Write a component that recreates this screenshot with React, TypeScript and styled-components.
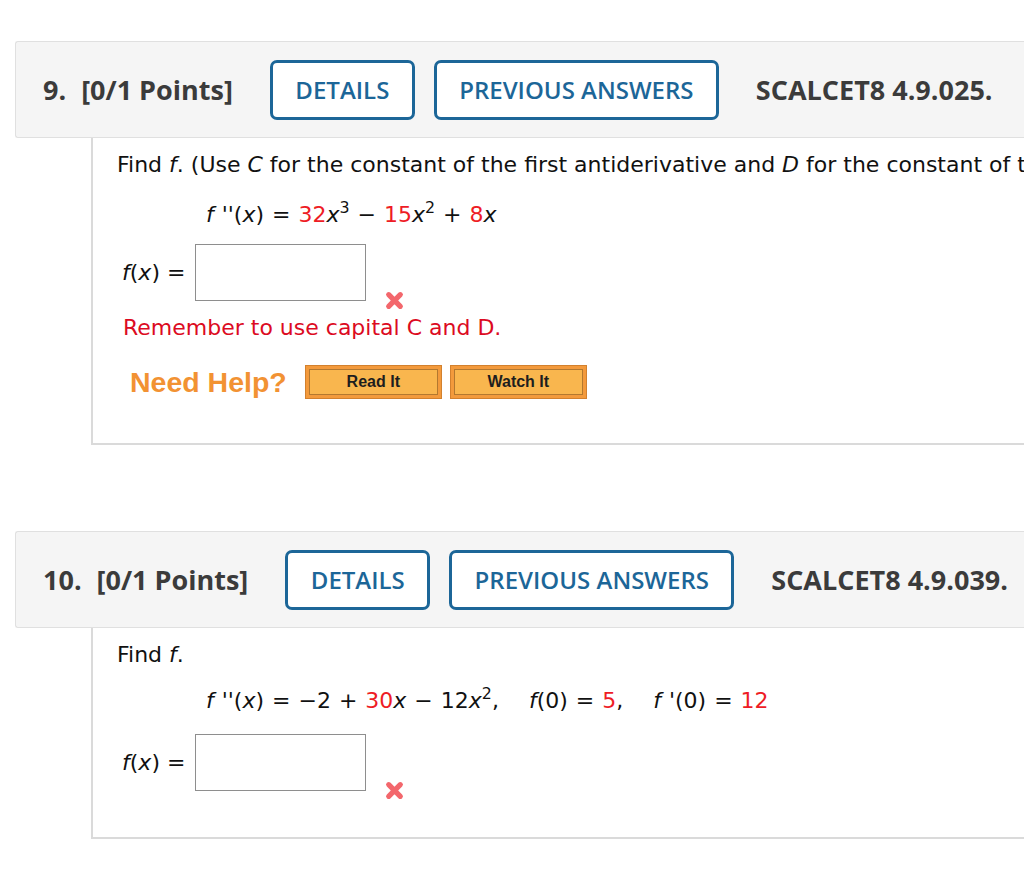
import React from 'react';
import styled, { createGlobalStyle } from 'styled-components';

const GlobalStyle = createGlobalStyle`
  html, body {
    margin: 0;
    padding: 0;
    background: #ffffff;
    overflow: hidden;
  }
`;

const Page = styled.div`
  padding: 41px 0 0 15px;
  width: 1200px;
`;

const Question = styled.section`
  margin-bottom: 86px;
`;

const Header = styled.div`
  display: flex;
  align-items: center;
  box-sizing: border-box;
  height: 97px;
  padding-left: 27px;
  background: #f5f5f5;
  border: 1px solid #e0e0e0;
  border-right: none;
  border-radius: 3px 0 0 3px;
  font-family: 'Open Sans', 'Liberation Sans', sans-serif;
  color: #3b3b3b;
`;

const QNum = styled.span`
  font-size: 27px;
  font-weight: 700;
  margin-right: 15px;
`;

const Points = styled.span`
  font-size: 27px;
  font-weight: 700;
  margin-right: 37px;
`;

const OutlineButton = styled.button<{ $w: number; $after: number }>`
  box-sizing: border-box;
  height: 60px;
  width: ${p => p.$w}px;
  margin-right: ${p => p.$after}px;
  background: #ffffff;
  border: 3px solid #1c6698;
  border-radius: 7px;
  font-family: 'Open Sans', 'Liberation Sans', sans-serif;
  font-size: 24px;
  font-weight: 600;
  color: #1c6698;
  padding: 0;
`;

const Reference = styled.span`
  font-size: 27px;
  font-weight: 700;
`;

const Body = styled.div<{ $bottom: number }>`
  margin-left: 76px;
  padding: 12px 0 ${p => p.$bottom}px 24px;
  border-left: 2px solid #dadada;
  border-bottom: 2px solid #dadada;
  font-family: 'DejaVu Sans', Verdana, sans-serif;
  font-size: 22px;
  line-height: 30px;
  color: #111111;
  white-space: nowrap;
`;

const Prompt = styled.div``;

const Formula = styled.div<{ $top: number }>`
  margin: ${p => p.$top}px 0 0 89px;
  word-spacing: 1px;
`;

const V = styled.i`
  font-style: italic;
`;

const Num = styled.span`
  color: #ee1c25;
`;

const Sup = styled.sup`
  font-size: 0.72em;
  line-height: 0;
  vertical-align: 0.55em;
`;

const Gap = styled.span<{ $w: number }>`
  display: inline-block;
  width: ${p => p.$w}px;
`;

const AnswerRow = styled.div<{ $top: number }>`
  display: flex;
  align-items: center;
  margin-top: ${p => p.$top}px;
  padding-left: 5px;
`;

const Label = styled.span`
  margin-right: 10px;
`;

const AnswerBox = styled.div`
  box-sizing: border-box;
  width: 171px;
  height: 57px;
  background: #fff;
  border: 1px solid #8e8e8e;
`;

const WrongMark = styled.svg`
  align-self: flex-end;
  margin: 0 0 -10px 18px;
  width: 21px;
  height: 21px;
`;

const Feedback = styled.div`
  margin: 12px 0 0 6px;
  color: #dc0a22;
`;

const HelpRow = styled.div`
  display: flex;
  align-items: center;
  margin: 22px 0 0 13px;
  font-family: 'Liberation Sans', Arial, sans-serif;
`;

const NeedHelp = styled.span`
  font-size: 28.5px;
  font-weight: 700;
  color: #f29233;
  margin-right: 18px;
`;

const HelpButton = styled.button`
  box-sizing: border-box;
  width: 137px;
  height: 34px;
  margin-right: 8px;
  padding: 0;
  background: #f9b64e;
  border: 1px solid #d3812e;
  box-shadow: inset 0 0 0 3px #f39a3c, inset 0 0 0 4px #b3782f;
  font-family: 'Liberation Sans', Arial, sans-serif;
  font-size: 16px;
  font-weight: 700;
  color: #1e1e1e;
`;

const Cross = () => (
  <WrongMark viewBox="0 0 20 20">
    <path d="M4.5 4.5 L15.5 15.5 M15.5 4.5 L4.5 15.5" stroke="#f2575d" strokeWidth="5" strokeLinecap="round" opacity="0.9" />
  </WrongMark>
);

const QuestionHeader = ({ num, code }: { num: string; code: string }) => (
  <Header>
    <QNum>{num}</QNum>
    <Points>[0/1 Points]</Points>
    <OutlineButton $w={145} $after={19}>DETAILS</OutlineButton>
    <OutlineButton $w={285} $after={37}>PREVIOUS ANSWERS</OutlineButton>
    <Reference>{code}</Reference>
  </Header>
);

export default function App() {
  return (
    <Page>
      <GlobalStyle />
      <Question>
        <QuestionHeader num="9." code="SCALCET8 4.9.025." />
        <Body $bottom={44}>
          <Prompt>
            Find <V>f</V>. (Use <V>C</V> for the constant of the first antiderivative and <V>D</V> for the constant of the second antiderivative.)
          </Prompt>
          <Formula $top={20}>
            <V>f</V> ''(<V>x</V>) = <Num>32</Num><V>x</V><Sup>3</Sup> − <Num>15</Num><V>x</V><Sup>2</Sup> + <Num>8</Num><V>x</V>
          </Formula>
          <AnswerRow $top={14}>
            <Label><V>f</V>(<V>x</V>) =</Label>
            <AnswerBox />
            <Cross />
          </AnswerRow>
          <Feedback>Remember to use capital C and D.</Feedback>
          <HelpRow>
            <NeedHelp>Need Help?</NeedHelp>
            <HelpButton>Read It</HelpButton>
            <HelpButton>Watch It</HelpButton>
          </HelpRow>
        </Body>
      </Question>
      <Question>
        <QuestionHeader num="10." code="SCALCET8 4.9.039." />
        <Body $bottom={46}>
          <Prompt>Find <V>f</V>.</Prompt>
          <Formula $top={16}>
            <V>f</V> ''(<V>x</V>) = −2 + <Num>30</Num><V>x</V> − 12<V>x</V><Sup>2</Sup>,<Gap $w={30} /><V>f</V>(0) = <Num>5</Num>,<Gap $w={30} /><V>f</V> '(0) = <Num>12</Num>
          </Formula>
          <AnswerRow $top={18}>
            <Label><V>f</V>(<V>x</V>) =</Label>
            <AnswerBox />
            <Cross />
          </AnswerRow>
        </Body>
      </Question>
    </Page>
  );
}
